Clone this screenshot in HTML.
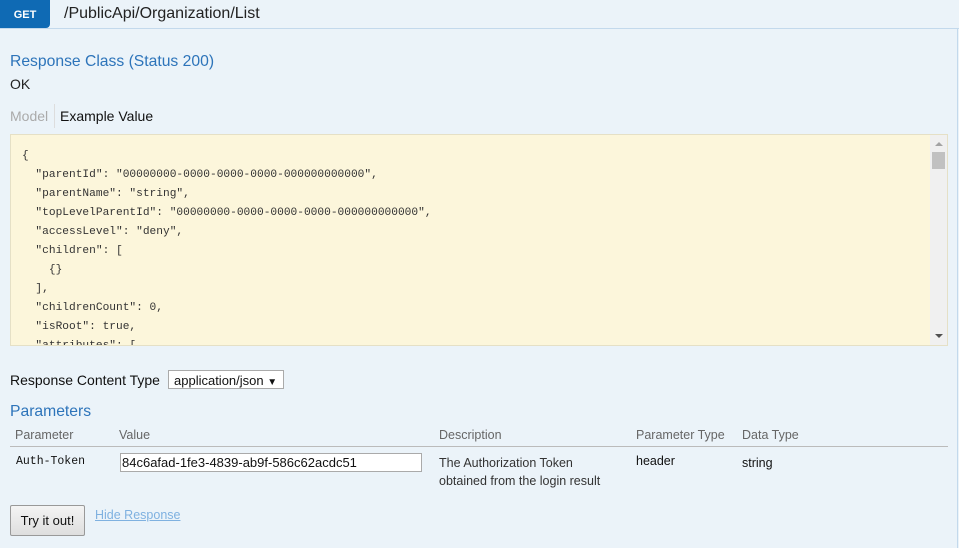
<!DOCTYPE html>
<html><head><meta charset="utf-8"><style>
*{margin:0;padding:0;box-sizing:border-box}
body{width:959px;height:548px;background:#ebf3f9;font-family:"Liberation Sans",Arial,sans-serif;position:relative;overflow:hidden;color:#222}
.a{position:absolute;white-space:nowrap}
.top{position:absolute;left:0;top:0;width:959px;height:29px;background:#ebf3f9;border-bottom:1px solid #c3d9ec}
.get{position:absolute;left:0;top:0;width:50px;height:28px;background:#0f6ab4;color:#fff;font-size:11px;font-weight:bold;text-align:center;line-height:30px;border-radius:0 0 4px 0}
.rb{position:absolute;left:957px;top:29px;width:1px;height:519px;background:#c3d9ec}
h4{position:absolute;font-weight:normal;color:#2d74ba;font-size:15.7px}
.code{position:absolute;left:10px;top:134px;width:938px;height:212px;background:#fcf6db;border:1px solid #e5e0c6;overflow:hidden}
.code pre{position:absolute;left:11px;top:12px;font-family:"Liberation Mono",monospace;font-size:11.2px;line-height:19px;color:#333}
.sb{position:absolute;right:0;top:0;width:17px;height:210px;background:#f0f0f0}
.th{position:absolute;font-size:12.5px;color:#666;top:428px}
</style></head><body>
<div class="top"><div class="get">GET</div><div class="a" style="left:64px;top:5px;font-size:16px;color:#222">/PublicApi/Organization/List</div></div>
<div class="rb"></div>
<h4 class="a" style="left:10px;top:53px">Response Class (Status 200)</h4>
<div class="a" style="left:10px;top:76px;font-size:14px">OK</div>
<div class="a" style="left:10px;top:108px;font-size:14px;color:#aaa">Model</div>
<div class="a" style="left:54px;top:104px;width:1px;height:24px;background:#ddd"></div>
<div class="a" style="left:60px;top:108px;font-size:14px;color:#111">Example Value</div>
<div class="code"><pre>{
  "parentId": "00000000-0000-0000-0000-000000000000",
  "parentName": "string",
  "topLevelParentId": "00000000-0000-0000-0000-000000000000",
  "accessLevel": "deny",
  "children": [
    {}
  ],
  "childrenCount": 0,
  "isRoot": true,
  "attributes": [</pre>
<div class="sb"><div class="a" style="left:5px;top:7px;border:4px solid transparent;border-bottom:4px solid #a3a3a3;border-top:0"></div><div class="a" style="left:2px;top:17px;width:13px;height:17px;background:#c1c1c1"></div><div class="a" style="left:5px;top:199px;border:4px solid transparent;border-top:4px solid #505050;border-bottom:0"></div></div></div>
<div class="a" style="left:10px;top:372px;font-size:14px;color:#111">Response Content Type</div>
<div class="a" style="left:168px;top:370px;width:116px;height:19px;background:#fff;border:1px solid #aaa;font-size:13px;padding:2px 0 0 5px;color:#111">application/json <span style="font-size:10px">▼</span></div>
<h4 class="a" style="left:10px;top:403px">Parameters</h4>
<div class="th" style="left:15px">Parameter</div>
<div class="th" style="left:119px">Value</div>
<div class="th" style="left:439px">Description</div>
<div class="th" style="left:636px">Parameter Type</div>
<div class="th" style="left:742px">Data Type</div>
<div class="a" style="left:10px;top:446px;width:938px;height:1px;background:#bbb"></div>
<div class="a" style="left:16px;top:455px;font-family:'Liberation Mono',monospace;font-size:11.5px;color:#111">Auth-Token</div>
<div class="a" style="left:120px;top:453px;width:302px;height:19px;background:#fff;border:1px solid #aaa;font-size:13px;padding:1px 0 0 1px;color:#111">84c6afad-1fe3-4839-ab9f-586c62acdc51</div>
<div class="a" style="left:439px;top:454px;font-size:12.5px;line-height:18px;color:#333">The Authorization Token<br>obtained from the login result</div>
<div class="a" style="left:636px;top:454px;font-size:12.5px;color:#111">header</div>
<div class="a" style="left:742px;top:456px;font-size:12.5px;color:#111">string</div>
<div class="a" style="left:10px;top:505px;width:75px;height:31px;background:linear-gradient(#f4f4f4,#dedede);border:1px solid #999;border-radius:2px;font-size:13px;text-align:center;line-height:29px;color:#111">Try it out!</div>
<div class="a" style="left:95px;top:508px;font-size:12.5px;color:#7fb1e0;text-decoration:underline">Hide Response</div>
</body></html>
